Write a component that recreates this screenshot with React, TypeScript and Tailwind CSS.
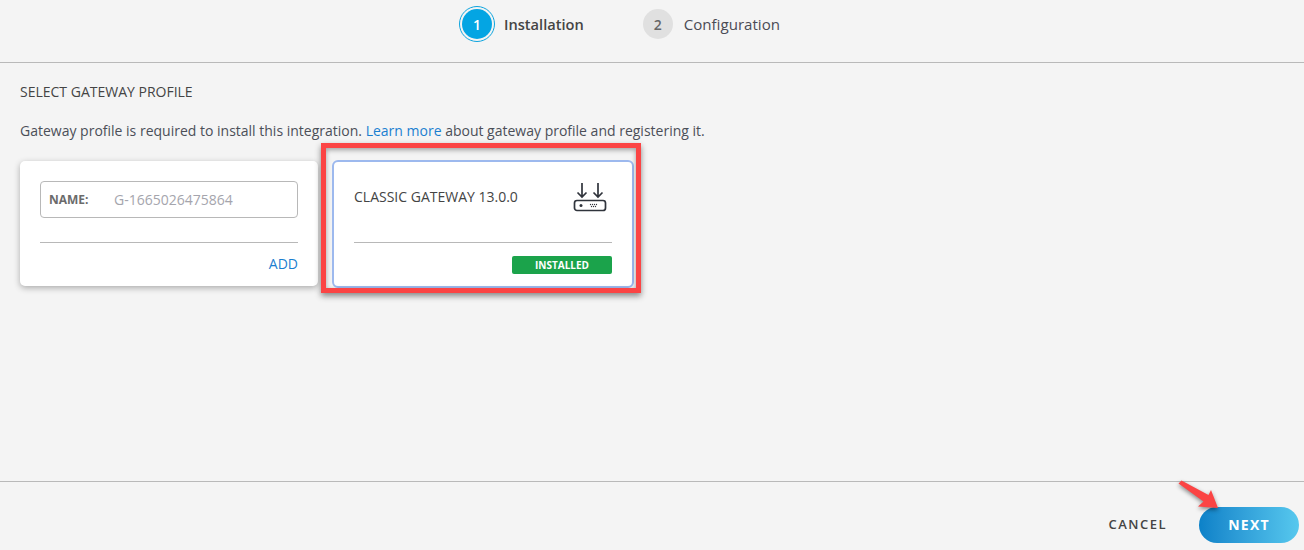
const font = "font-['Open_Sans',sans-serif]"

function Step({ num, label, active }: { num: number; label: string; active?: boolean }) {
  return (
    <div className="flex items-center">
      {active ? (
        <div className="flex h-[36px] w-[36px] items-center justify-center rounded-full border border-[#0ea5df] bg-[#f4f4f4]">
          <div className="flex h-[30px] w-[30px] items-center justify-center rounded-full bg-[#04a5e3] text-[14px] font-semibold text-white">
            {num}
          </div>
        </div>
      ) : (
        <div className="flex h-[30px] w-[30px] items-center justify-center rounded-full bg-[#e0e0e0] text-[14px] font-semibold text-[#666]">
          {num}
        </div>
      )}
      <span className={active ? 'ml-[9px] mt-[1px] text-[14.600px] font-semibold text-[#444]' : 'ml-[11px] text-[15.100px] text-[#4b4b55]'}>
        {label}
      </span>
    </div>
  )
}

function GatewayIcon() {
  return (
    <svg width="34" height="30" viewBox="0 0 34 30" fill="none" stroke="#30343c" strokeWidth="1.700">
      <path d="M9 1v14M4.500 10.500 9 15l4.500-4.500" />
      <path d="M25 1v14M20.500 10.500 25 15l4.500-4.500" />
      <rect x="1.500" y="18.500" width="31" height="10" rx="2.500" />
      <circle cx="8" cy="23.500" r="1.500" fill="#30343c" stroke="none" />
      <path d="M17.500 22.500h.01M19.500 22.500h.01M21.500 22.500h.01M23.500 22.500h.01M18.500 24.500h.01M20.500 24.500h.01M22.500 24.500h.01" strokeWidth="1.300" strokeLinecap="round" />
    </svg>
  )
}

export default function App() {
  return (
    <div className={`${font} flex h-[550px] w-[1304px] flex-col overflow-hidden bg-[#f4f4f4] text-[#444]`}>
      <header className="flex h-[63px] shrink-0 items-start justify-center gap-[59px] border-b border-[#b9b9b9] pr-[65px] pt-[6px]">
        <Step num={1} label="Installation" active />
        <div className="pt-[3px]">
          <Step num={2} label="Configuration" />
        </div>
      </header>

      <main className="flex-1 px-[20px] pt-[19px]">
        <h2 className="text-[14px] leading-[20px] text-[#444]">SELECT GATEWAY PROFILE</h2>
        <p className="mt-[19px] text-[14px] leading-[20px] text-[#4b4f58]">
          Gateway profile is required to install this integration.{' '}
          <span className="text-[#1b7fd0]">Learn more</span> about gateway profile and registering it.
        </p>

        <div className="mt-[19px] flex items-start gap-[14px]">
          <div className="mt-[1px] flex h-[125px] w-[298px] flex-col rounded-[5px] bg-white px-[20px] pt-[20px] shadow-[0_2px_6px_rgba(0,0,0,0.3)]">
            <div className="flex h-[37px] items-center rounded-[4px] border border-[#b8b8b8] pl-[8px]">
              <span className="w-[65px] text-[12px] font-bold text-[#6b6b6b]">NAME:</span>
              <span className="text-[14px] text-[#a5a5ad]">G-1665026475864</span>
            </div>
            <div className="mt-[24px] border-t border-[#b8b8b8]" />
            <div className="mt-[11px] text-right text-[14px] leading-[20px] text-[#1b7fd0]">ADD</div>
          </div>

          <div className="relative flex h-[128px] w-[302px] flex-col rounded-[6px] border-2 border-[#9db9ee] bg-white px-[20px] pt-[20px]">
            <div className="flex h-[50px] items-start justify-between">
              <span className="mt-[3px] text-[14px] leading-[24px] text-[#444]">CLASSIC GATEWAY 13.0.0</span>
              <div className="mr-[5px]">
                <GatewayIcon />
              </div>
            </div>
            <div className="mt-[10px] border-t border-[#b8b8b8]" />
            <div className="mt-[13px] flex justify-end">
              <span className="flex h-[18px] w-[100px] items-center justify-center rounded-[2px] bg-[#1ba34b] text-[10px] font-bold text-white">
                INSTALLED
              </span>
            </div>
            <div className="absolute -bottom-[7px] -left-[13px] -right-[9px] -top-[19px] border-[5px] border-[#fb4444] shadow-[0_3px_6px_rgba(0,0,0,0.45),inset_0_2px_5px_rgba(0,0,0,0.35)]" />
          </div>
        </div>
      </main>

      <footer className="relative mb-[7px] flex h-[62px] shrink-0 items-end justify-end border-t border-[#b9b9b9] pr-[5px]">
        <span className="mb-[9px] mr-[32px] text-[13px] font-semibold tracking-[1.500px] text-[#444]">CANCEL</span>
        <button className="h-[36px] w-[100px] rounded-full bg-gradient-to-r from-[#0b81c8] to-[#56c8ee] pb-[2px] text-[14px] font-bold tracking-[1.200px] text-white">
          NEXT
        </button>
        <svg className="absolute right-[82px] top-[-2px] drop-shadow-[0_2px_2px_rgba(0,0,0,0.45)]" width="44" height="34" viewBox="0 0 44 34">
          <path d="M0.500 3.500 3.500 0.500 30.500 15 33 10 40 28 20 26.500 25.500 21.500Z" fill="#fb4444" />
        </svg>
      </footer>
    </div>
  )
}
